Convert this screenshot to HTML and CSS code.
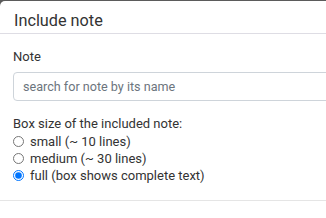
FILE: index.html
```html
<!DOCTYPE html>
<html lang="en">

<head>
    <meta charset="UTF-8">
    <meta name="viewport" content="width=device-width, initial-scale=1.0">
    <title>Include note</title>
    <link rel="stylesheet" href="styles.css">
</head>

<body>
    <div class="modal">
        <div class="modal-header">
            <h5 class="modal-title">Include note</h5>
        </div>

        <form class="modal-body">
            <div class="form-group">
                <label for="noteAutocomplete">Note</label>
                <input type="text" id="noteAutocomplete" class="form-control" placeholder="search for note by its name">
            </div>

            <div class="box-size">
                <div class="box-size-label">Box size of the included note:</div>
                <label class="form-check">
                    <input type="radio" name="boxSize" value="small">
                    small (~ 10 lines)
                </label>
                <label class="form-check">
                    <input type="radio" name="boxSize" value="medium">
                    medium (~ 30 lines)
                </label>
                <label class="form-check">
                    <input type="radio" name="boxSize" value="full" checked>
                    full (box shows complete text)
                </label>
            </div>
        </form>

        <div class="modal-footer"></div>
    </div>
</body>

</html>
```

FILE: styles.css
```css
html,
body {
    height: 100%;
    overflow: hidden;
}

body {
    margin: 0;
    padding-top: 1px;
    box-sizing: border-box;
    background-color: #5b5b5b;
    font-family: Roboto, "Liberation Sans", sans-serif;
    font-size: 13px;
    color: #333;
}

.modal {
    width: 380px;
    height: 230px;
    background: white;
    border-radius: 5px 0 0 0;
}

.modal-header {
    padding: 10px 14px 2px;
    border-bottom: 1px solid #dedde4;
}

.modal-title {
    margin: 0;
    font-size: 16.25px;
    font-weight: 400;
    line-height: 20px;
}

.modal-body {
    padding: 13px 13px 16px;
}

.form-group {
    margin-bottom: 13px;
}

.form-group label {
    display: block;
    line-height: 19px;
    margin-bottom: 6px;
}

.form-control {
    display: block;
    width: 100%;
    height: 29px;
    padding: 0 9px;
    font-family: inherit;
    font-size: 12.6px;
    border: 1px solid #ced4da;
    border-radius: 4px;
    box-sizing: border-box;
}

.form-control::placeholder {
    color: #6c757d;
}

.box-size-label {
    line-height: 19px;
}

.form-check {
    display: flex;
    align-items: center;
    line-height: 17px;
}

.form-check input {
    margin: 0 6px 0 0;
    width: 11px;
    height: 11px;
}

.modal-footer {
    border-top: 1px solid #e5e5e5;
}
```
